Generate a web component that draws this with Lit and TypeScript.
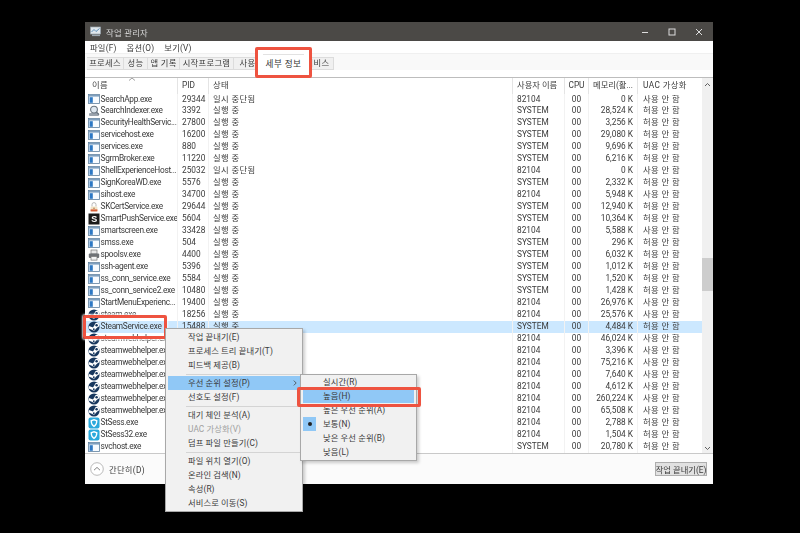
import { LitElement, html, css, svg } from "lit";
import { customElement } from "lit/decorators.js";

type Row = [string, string, string, string, string, string, string?];
const RUN = "실행 중";
const SUS = "일시 중단됨";
const A = "사용 안 함";
const D = "허용 안 함";
const SY = "SYSTEM";
const U = "82104";
const rows: Row[] = [
  ["SearchApp.exe", "29344", SUS, U, "0 K", A],
  ["SearchIndexer.exe", "3392", RUN, SY, "28,524 K", D, "idx"],
  ["SecurityHealthServic...", "27800", RUN, SY, "3,256 K", D],
  ["servicehost.exe", "16200", RUN, SY, "29,080 K", D],
  ["services.exe", "880", RUN, SY, "9,696 K", D],
  ["SgrmBroker.exe", "11220", RUN, SY, "6,216 K", D],
  ["ShellExperienceHost...", "25032", SUS, U, "0 K", A],
  ["SignKoreaWD.exe", "5576", RUN, SY, "2,332 K", D],
  ["sihost.exe", "34700", RUN, U, "5,948 K", A],
  ["SKCertService.exe", "29644", RUN, SY, "12,940 K", D, "lock"],
  ["SmartPushService.exe", "5604", RUN, SY, "10,364 K", D, "s"],
  ["smartscreen.exe", "33428", RUN, U, "5,588 K", A],
  ["smss.exe", "504", RUN, SY, "296 K", D],
  ["spoolsv.exe", "4400", RUN, SY, "6,032 K", D, "print"],
  ["ssh-agent.exe", "5396", RUN, SY, "1,012 K", D],
  ["ss_conn_service.exe", "5584", RUN, SY, "1,520 K", D],
  ["ss_conn_service2.exe", "10480", RUN, SY, "1,428 K", D],
  ["StartMenuExperienc...", "19400", RUN, U, "26,976 K", A],
  ["steam.exe", "18256", RUN, U, "25,576 K", A, "steam"],
  ["SteamService.exe", "15488", RUN, SY, "4,484 K", D, "steam"],
  ["steamwebhelper.exe", "", "", U, "46,024 K", A, "steam"],
  ["steamwebhelper.exe", "", "", U, "3,396 K", A, "steam"],
  ["steamwebhelper.exe", "", "", U, "75,216 K", A, "steam"],
  ["steamwebhelper.exe", "", "", U, "7,640 K", A, "steam"],
  ["steamwebhelper.exe", "", "", U, "4,612 K", A, "steam"],
  ["steamwebhelper.exe", "", "", U, "260,224 K", A, "steam"],
  ["steamwebhelper.exe", "", "", U, "65,508 K", A, "steam"],
  ["StSess.exe", "", "", U, "2,788 K", D, "shield"],
  ["StSess32.exe", "", "", U, "1,504 K", D, "shield"],
  ["svchost.exe", "", "", SY, "20,780 K", D],
];

function icon(kind?: string) {
  let c;
  switch (kind) {
    case "steam":
      c = svg`<circle cx="6" cy="6" r="5.6" fill="#17375e"/>
        <path d="M0.6 7.4 L4.4 9 A1.9 1.9 0 0 0 7.6 8 L9.6 6.3 A2.3 2.3 0 1 0 6.6 4.1 L5 6.6 L1 5 Z" fill="#fff"/>
        <circle cx="8.6" cy="4.3" r="1.2" fill="#17375e"/>
        <circle cx="5.8" cy="8.2" r="0.9" fill="#17375e"/>`;
      break;
    case "shield":
      c = svg`<rect x="0.5" y="0.5" width="11" height="11" rx="2" fill="#2aa9dc"/>
        <path d="M6 2 L9.5 3.2 C9.5 6.5 8.4 8.8 6 10.2 C3.6 8.8 2.5 6.5 2.5 3.2 Z" fill="#fff"/>
        <path d="M6 3.6 L8 4.3 C8 6.2 7.4 7.5 6 8.4 C4.6 7.5 4 6.2 4 4.3 Z" fill="#2aa9dc"/>`;
      break;
    case "s":
      c = svg`<rect x="0.5" y="0.5" width="11" height="11" fill="#1a1a1a"/>
        <text x="6" y="9.4" text-anchor="middle" font-size="9" font-weight="700" font-family="Liberation Sans, sans-serif" fill="#fff">S</text>`;
      break;
    case "print":
      c = svg`<rect x="3" y="1" width="6" height="4" fill="#e8e8e8" stroke="#777" stroke-width="0.7"/>
        <rect x="0.8" y="4.5" width="10.4" height="4.6" rx="1" fill="#6f7276"/>
        <rect x="3" y="7.5" width="6" height="3.6" fill="#f3f3f3" stroke="#777" stroke-width="0.7"/>`;
      break;
    case "lock":
      c = svg`<path d="M4 5.5 V3.6 A2 2 0 0 1 8 3.6 V5.5" fill="none" stroke="#b8b8b8" stroke-width="1"/>
        <rect x="2.6" y="5.6" width="6.8" height="4.8" rx="0.8" fill="#f1e3c8"/>
        <rect x="2.6" y="8.4" width="6.8" height="2" fill="#d9603a"/>
        <circle cx="6" cy="7.2" r="0.7" fill="#a06a30"/>`;
      break;
    case "idx":
      c = svg`<rect x="1" y="8" width="10" height="3" rx="1" fill="#9aa3ad"/>
        <circle cx="6" cy="4.6" r="3.4" fill="#dfe8f0" stroke="#68747f" stroke-width="1.1"/>
        <path d="M8.4 7 L11 9.6" stroke="#68747f" stroke-width="1.3"/>`;
      break;
    default:
      c = svg`<rect x="0.5" y="1.5" width="11" height="9" fill="#f7fbff" stroke="#5d7f9f" stroke-width="0.8"/>
        <rect x="1" y="2" width="10" height="1.6" fill="#7f9fbe"/>
        <rect x="1.6" y="4.2" width="3.2" height="5.6" fill="#2d78c4"/>`;
  }
  return html`<svg class="ic" viewBox="0 0 12 12" width="12" height="12">${c}</svg>`;
}

@customElement("app-root")
export class AppRoot extends LitElement {
  static styles = css`
    :host {
      display: block;
      position: relative;
      width: 800px;
      height: 533px;
      overflow: hidden;
      background: #000;
      font-family: Roboto, "Noto Sans CJK KR", sans-serif;
      font-size: 8.3px;
      color: #3a3a3a;
    }
    .page { padding: 22px 0 0 85px; filter: blur(0.25px); }
    .win {
      width: 628px;
      height: 462px;
      background: #fff;
      display: flex;
      flex-direction: column;
    }
    .title {
      height: 19px;
      background: #4b4946;
      color: #d8d8d8;
      display: flex;
      align-items: center;
      padding-left: 5px;
      gap: 4px;
      flex: none;
      letter-spacing: 0.3px;
    }
    .spacer { flex: 1; }
    .wbtns { display: flex; gap: 19px; padding-right: 10px; align-items: center; }
    .menu {
      height: 12px;
      display: flex;
      gap: 10px;
      padding-left: 5px;
      align-items: center;
      flex: none;
      letter-spacing: 0.2px;
    }
    .tabsbar {
      height: 17px;
      background: #f9f9f9;
      border-top: 1px solid #f0f0f0;
      display: flex;
      align-items: flex-start;
      padding: 3px 0 0 2px;
      box-sizing: border-box;
      flex: none;
    }
    .tab {
      height: 13px;
      background: #f0f0f0;
      border: 1px solid #dcdcdc;
      border-left: 0;
      box-sizing: border-box;
      display: flex;
      align-items: center;
      justify-content: center;
      letter-spacing: 0.3px;
      line-height: 1;
      white-space: nowrap;
      overflow: hidden;
    }
    .gapbar {
      height: 8px;
      background: #fff;
      border-bottom: 1px solid #bdbdbd;
      box-sizing: border-box;
      flex: none;
    }
    .body { flex: 1; display: flex; min-height: 0; }
    .tbl { flex: 1; min-width: 0; }
    .row {
      display: grid;
      grid-template-columns: 93px 31px 304px 52px 24px 49px 1fr;
      height: 11.97px;
      line-height: 11.97px;
      white-space: nowrap;
    }
    .row.head { height: 15.5px; line-height: 15px; }
    .row.sel { background: #cce8ff; }
    .cell { border-right: 1px solid #f2f2f2; box-sizing: border-box; overflow: hidden; }
    .head .cell { border-right-color: #e4e4e4; position: relative; }
    .name {
      display: flex;
      align-items: center;
      padding-left: 3px;
      letter-spacing: -0.3px;
    }
    .ic { flex: none; margin-right: 0.5px; }
    .head .name { padding-left: 7px; letter-spacing: 0.3px; }
    .pid { padding-left: 4px; }
    .st { padding-left: 4px; letter-spacing: 0.4px; }
    .us { padding-left: 4px; }
    .cpu { text-align: center; }
    .mem { text-align: right; padding-right: 4px; }
    .uac { padding-left: 5px; letter-spacing: 0.4px; border-right: 0; }
    .caret { position: absolute; left: 43px; top: -1px; }
    .scroll {
      width: 11px;
      flex: none;
      background: #f0f0f0;
      display: flex;
      flex-direction: column;
      align-items: center;
      justify-content: space-between;
      padding: 4px 0 2px;
      box-sizing: border-box;
      position: relative;
    }
    .thumb {
      position: absolute;
      left: 0;
      right: 0;
      top: 180px;
      height: 33px;
      background: #cdcdcd;
    }
    .foot {
      height: 31px;
      flex: none;
      border-top: 1px solid #c9c9c9;
      box-sizing: border-box;
      display: flex;
      align-items: center;
      padding: 0 6px 0 5px;
      background: #fbfbfb;
    }
    .foot .lbl { margin-left: 5px; letter-spacing: 0.3px; }
    .endbtn {
      width: 52px;
      height: 14px;
      background: #e1e1e1;
      border: 1px solid #adadad;
      box-sizing: border-box;
      display: flex;
      align-items: center;
      justify-content: center;
      white-space: nowrap;
    }
    .pop {
      position: absolute;
      background: #f1f1f1;
      border: 1px solid #a8a8a8;
      box-shadow: 2px 2px 3px rgba(0, 0, 0, 0.2);
      box-sizing: border-box;
      padding: 1px 2px;
    }
    .ctx { left: 165px; top: 328px; width: 138px; height: 184px; }
    .sub { left: 300px; top: 374px; width: 117px; height: 87px; padding-top: 0; }
    .it {
      height: 14px;
      line-height: 14px;
      padding-left: 20px;
      letter-spacing: 0.1px;
      position: relative;
      white-space: nowrap;
    }
    .sub .it { height: 14.1px; }
    .it.hl { background: #90c8f6; }
    .it.dis { color: #a0a0a0; }
    .sep { height: 1px; background: #d4d4d4; margin: 1.5px 0 1.5px 18px; }
    .arrow { position: absolute; right: 3px; top: 4px; }
    .dot {
      position: absolute;
      left: 0;
      top: 0;
      width: 13px;
      height: 14px;
      background: #90c8f6;
      display: flex;
      align-items: center;
      justify-content: center;
    }
    .dot::after {
      content: "";
      width: 4px;
      height: 4px;
      border-radius: 50%;
      background: #222;
    }
    .mark {
      position: absolute;
      border: 3px solid #ee5340;
      border-radius: 2px;
      box-sizing: border-box;
    }
    .m-tab {
      left: 255px;
      top: 47px;
      width: 57px;
      height: 31px;
      background: #fff;
      display: flex;
      align-items: center;
      justify-content: center;
      letter-spacing: 0.4px;
      font-size: 8.6px;
      color: #333;
    }
    .m-tab::before {
      content: "";
      position: absolute;
      left: 5px;
      right: 5px;
      top: 4px;
      height: 1px;
      background: #e2e2e2;
    }
    .m-steam {
      left: 83px;
      top: 315px;
      width: 84px;
      height: 24px;
      box-shadow: 0 0 2px 1px rgba(255, 255, 255, 0.85);
    }
    .m-high { left: 297px; top: 387px; width: 124px; height: 20px; }
  `;

  render() {
    const tabs: [string, number][] = [
      ["프로세스", 37],
      ["성능", 24],
      ["앱 기록", 32],
      ["시작프로그램", 54],
      ["사용자", 36],
      ["", 32],
      ["서비스", 32],
    ];
    return html`
      <div class="page">
        <div class="win">
          <div class="title">
            <svg width="12" height="11" viewBox="0 0 12 11">
              <rect x="0.5" y="1" width="10" height="7" fill="#dfe6ec" stroke="#9aa5ae" stroke-width="0.7"/>
              <path d="M1.5 6 L4 3.5 L6 5.5 L9.5 2.5" fill="none" stroke="#4f87b3" stroke-width="0.9"/>
              <rect x="2" y="8.5" width="8" height="1.6" fill="#9aa5ae"/>
            </svg>
            <span>작업 관리자</span>
            <span class="spacer"></span>
            <div class="wbtns">
              <svg width="8" height="8" viewBox="0 0 8 8"><path d="M1 4.5 H7" stroke="#ddd" stroke-width="1"/></svg>
              <svg width="8" height="8" viewBox="0 0 8 8"><rect x="1" y="1" width="6" height="6" fill="none" stroke="#ddd" stroke-width="1"/></svg>
              <svg width="8" height="8" viewBox="0 0 8 8"><path d="M1 1 L7 7 M7 1 L1 7" stroke="#ddd" stroke-width="1"/></svg>
            </div>
          </div>
          <div class="menu"><span>파일(F)</span><span>옵션(O)</span><span>보기(V)</span></div>
          <div class="tabsbar">
            ${tabs.map(([t, w]) => html`<div class="tab" style="width:${w}px">${t}</div>`)}
          </div>
          <div class="gapbar"></div>
          <div class="body">
            <div class="tbl">
              <div class="row head">
                <div class="cell name">
                  이름
                  <svg class="caret" width="8" height="4" viewBox="0 0 8 4"><path d="M1 3.5 L4 1 L7 3.5" fill="none" stroke="#888" stroke-width="0.8"/></svg>
                </div>
                <div class="cell pid">PID</div>
                <div class="cell st">상태</div>
                <div class="cell us">사용자 이름</div>
                <div class="cell cpu">CPU</div>
                <div class="cell mem">메모리(활...</div>
                <div class="cell uac">UAC 가상화</div>
              </div>
              ${rows.map(
                (r, i) => html`<div class="row ${i === 19 ? "sel" : ""}">
                  <div class="cell name">${icon(r[6])}${r[0]}</div>
                  <div class="cell pid">${r[1]}</div>
                  <div class="cell st">${r[2]}</div>
                  <div class="cell us">${r[3]}</div>
                  <div class="cell cpu">00</div>
                  <div class="cell mem">${r[4]}</div>
                  <div class="cell uac">${r[5]}</div>
                </div>`
              )}
            </div>
            <div class="scroll">
              <svg width="7" height="5" viewBox="0 0 7 5"><path d="M1 4 L3.5 1.5 L6 4" fill="none" stroke="#606060" stroke-width="1"/></svg>
              <div class="thumb"></div>
              <svg width="7" height="5" viewBox="0 0 7 5"><path d="M1 1 L3.5 3.5 L6 1" fill="none" stroke="#606060" stroke-width="1"/></svg>
            </div>
          </div>
          <div class="foot">
            <svg width="14" height="14" viewBox="0 0 14 14">
              <circle cx="7" cy="7" r="6.3" fill="#fff" stroke="#a8a8a8" stroke-width="0.8"/>
              <path d="M4 8.2 L7 5.4 L10 8.2" fill="none" stroke="#777" stroke-width="0.9"/>
            </svg>
            <span class="lbl">간단히(D)</span>
            <span class="spacer"></span>
            <div class="endbtn">작업 끝내기(E)</div>
          </div>
        </div>
      </div>

      <div class="mark m-tab">세부 정보</div>
      <div class="mark m-steam"></div>

      <div class="pop ctx">
        <div class="it">작업 끝내기(E)</div>
        <div class="it">프로세스 트리 끝내기(T)</div>
        <div class="it">피드백 제공(B)</div>
        <div class="sep"></div>
        <div class="it hl">
          우선 순위 설정(P)
          <svg class="arrow" width="4" height="6" viewBox="0 0 4 6"><path d="M0.8 0.6 L3.2 3 L0.8 5.4" fill="none" stroke="#444" stroke-width="0.8"/></svg>
        </div>
        <div class="it">선호도 설정(F)</div>
        <div class="sep"></div>
        <div class="it">대기 체인 분석(A)</div>
        <div class="it dis">UAC 가상화(V)</div>
        <div class="it">덤프 파일 만들기(C)</div>
        <div class="sep"></div>
        <div class="it">파일 위치 열기(O)</div>
        <div class="it">온라인 검색(N)</div>
        <div class="it">속성(R)</div>
        <div class="it">서비스로 이동(S)</div>
      </div>

      <div class="pop sub">
        <div class="it">실시간(R)</div>
        <div class="it hl">높음(H)</div>
        <div class="it">높은 우선 순위(A)</div>
        <div class="it"><span class="dot"></span>보통(N)</div>
        <div class="it">낮은 우선 순위(B)</div>
        <div class="it">낮음(L)</div>
      </div>
      <div class="mark m-high"></div>
    `;
  }
}
